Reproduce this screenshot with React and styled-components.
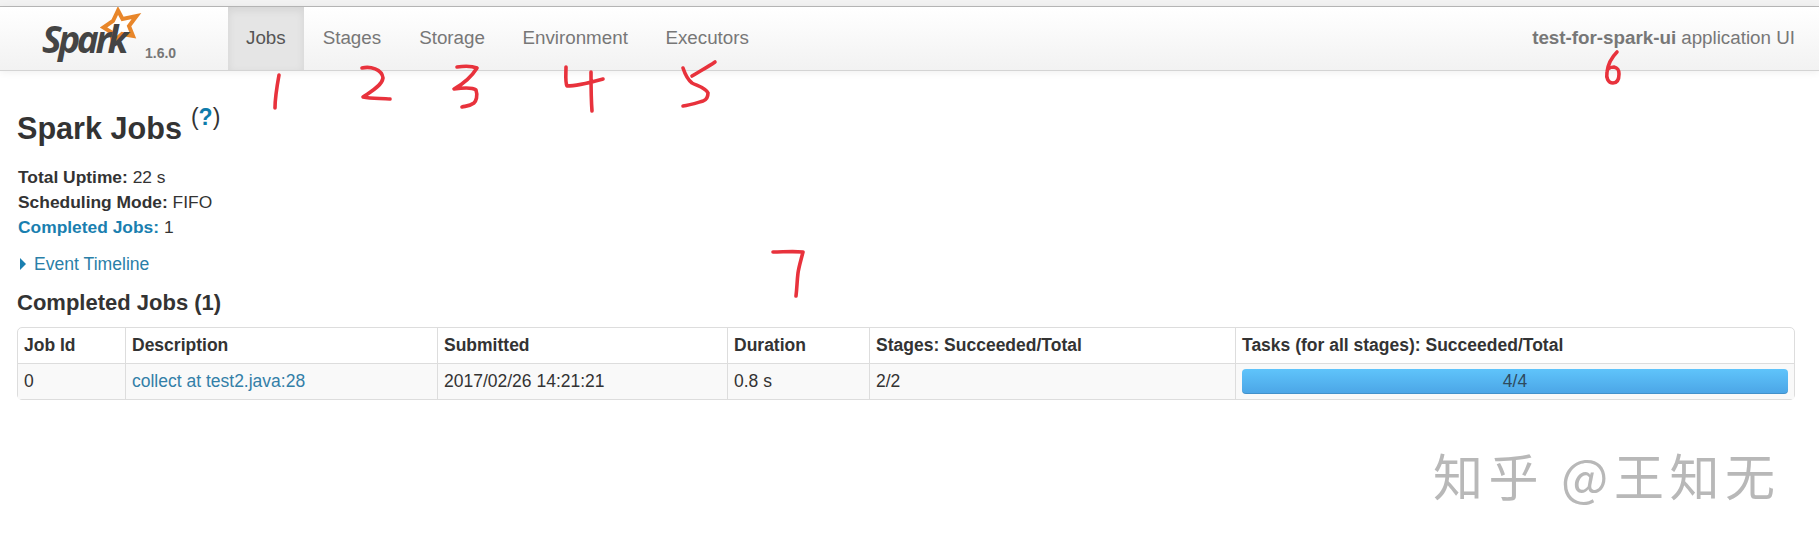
import React from "react";
import styled, { createGlobalStyle } from "styled-components";

const GlobalStyle = createGlobalStyle`
  html, body {
    margin: 0;
    padding: 0;
    background: #fff;
  }
  body {
    font-family: "Liberation Sans", Arial, sans-serif;
    font-size: 17.4px;
    color: #333;
    overflow: hidden;
  }
`;

const Page = styled.div`
  position: relative;
  width: 1819px;
  height: 549px;
  overflow: hidden;
`;

const TopStrip = styled.div`
  height: 6px;
  background: #f2f2f2;
  border-bottom: 1px solid #b9b9b9;
`;

const Navbar = styled.nav`
  height: 63px;
  display: flex;
  align-items: stretch;
  padding-right: 24px;
  background: linear-gradient(to bottom, #ffffff, #f2f2f2);
  border-bottom: 1px solid #d4d4d4;
  box-shadow: 0 1px 8px rgba(0, 0, 0, 0.07);
`;

const Brand = styled.div`
  width: 228px;
  flex: none;
  display: flex;
`;

const Tabs = styled.div`
  display: flex;
  flex: 1;
`;

const Tab = styled.a`
  display: flex;
  align-items: center;
  box-sizing: border-box;
  height: 63px;
  padding: 0 ${(p) => p.$pad}px 2px ${(p) => p.$pad}px;
  font-size: 18.8px;
  color: ${(p) => (p.$active ? "#555" : "#777")};
  background: ${(p) => (p.$active ? "#e5e5e5" : "transparent")};
  box-shadow: ${(p) => (p.$active ? "inset 0 3px 8px rgba(0,0,0,0.08)" : "none")};
`;

const AppName = styled.div`
  display: flex;
  align-items: center;
  gap: 5px;
  padding-bottom: 2px;
  font-size: 18.8px;
  color: #777;
  b {
    font-weight: 700;
  }
`;

const Content = styled.main`
  padding: 37px 18px 0 17px;
`;

const Title = styled.h3`
  margin: 0;
  display: flex;
  align-items: flex-start;
  gap: 9px;
  font-size: 30.6px;
  line-height: 40px;
  font-weight: 700;
  color: #333;
`;

const Help = styled.sup`
  font-size: 23px;
  line-height: 26px;
  font-weight: 400;
  margin-top: -4px;
  color: #333;
  a {
    color: #0f7bab;
    font-weight: 700;
  }
`;

const Summary = styled.ul`
  list-style: none;
  margin: 17px 0 0;
  padding: 0 0 0 1px;
  line-height: 25px;
  li strong {
    font-weight: 700;
  }
`;

const SummaryLink = styled.strong`
  color: #1a7fb0;
`;

const Timeline = styled.div`
  display: flex;
  align-items: center;
  gap: 8px;
  margin-top: 11px;
  height: 26px;
  padding-left: 3px;
  font-size: 17.6px;
  color: #2a7fa8;
`;

const Arrow = styled.span`
  width: 0;
  height: 0;
  border-left: 6px solid #1a7fb0;
  border-top: 6px solid transparent;
  border-bottom: 6px solid transparent;
`;

const SectionTitle = styled.h4`
  margin: 12px 0 0;
  font-size: 22px;
  line-height: 28px;
  font-weight: 700;
  color: #333;
`;

const Table = styled.table`
  width: 1778px;
  margin-top: 10px;
  table-layout: fixed;
  border-collapse: separate;
  border-spacing: 0;
  border: 1px solid #ddd;
  border-radius: 5px;
  font-size: 17.5px;
`;

const Th = styled.th`
  height: 35px;
  padding: 0 6px;
  text-align: left;
  font-weight: 700;
  color: #333;
  border-left: ${(p) => (p.$first ? "none" : "1px solid #ddd")};
  border-bottom: 1px solid #ddd;
`;

const Td = styled.td`
  height: 35px;
  padding: 0 6px;
  background: #f9f9f9;
  color: #333;
  border-left: ${(p) => (p.$first ? "none" : "1px solid #ddd")};
`;

const JobLink = styled.a`
  color: #337fa8;
`;

const Progress = styled.div`
  height: 25px;
  display: flex;
  align-items: center;
  justify-content: center;
  border-radius: 4px;
  color: #2f4a5e;
  background: linear-gradient(to bottom, #5fc4fb, #4ba5e6);
  box-shadow: inset 0 -1px 0 rgba(0, 0, 0, 0.12);
`;

const Watermark = styled.div`
  position: absolute;
  left: 1433px;
  top: 441px;
  font-family: "Noto Sans CJK SC", "Liberation Sans", sans-serif;
  font-size: 50px;
  font-weight: 400;
  line-height: 66px;
  letter-spacing: 5.6px;
  color: #b8b8b8;
  white-space: pre;
`;

const Marks = styled.svg`
  position: absolute;
  left: 0;
  top: 0;
  pointer-events: none;
`;

const marks = [
  "M279 75 C277 86 275 97 275 108",
  "M362 68 C370 66 382 69 383 78 C382 86 370 92 363 97 C372 99 382 98 390 99",
  "M457 67 C464 66 472 66 477 68 C472 76 463 84 454 89 C462 88 472 87 476 90 C478 96 476 101 474 103 C470 106 466 106 462 107",
  "M566 67 C566 74 565 82 567 86 C578 86 592 82 603 79 M591 72 C591 85 591 98 592 111",
  "M715 62 C708 67 700 71 692 76 M683 68 C685 74 688 80 692 83 C698 86 706 88 708 93 C708 98 706 100 703 101 C696 103 690 105 683 106",
  "M1617 52 C1611 58 1608 64 1607 72 C1606 78 1608 83 1613 83 C1618 83 1619 78 1619 74 C1619 70 1618 68 1614 67 C1611 67 1609 68 1608 69",
  "M773 252 C783 252 793 251 803 252 C801 260 799 266 798 273 C797 281 797 288 796 296",
];

function SparkLogo() {
  return (
    <svg width="228" height="63" viewBox="0 0 228 63">
      <path
        d="M118 3.5 L122.5 12 L136.5 9 L129 19 L133 29 L122 27 L113 35 L111 25 L103.5 20.5 L113 14 Z"
        fill="#fff"
        stroke="#e8862a"
        strokeWidth="4"
        strokeLinejoin="miter"
      />
      <text x="42" y="46" fontFamily="'Open Sans', sans-serif" fontStyle="italic" fontWeight="700" fontSize="37" letterSpacing="-3.4" fill="#444">
        Spark
      </text>
      <text x="145" y="51" fontFamily="'Liberation Sans', sans-serif" fontWeight="700" fontSize="14" fill="#777">
        1.6.0
      </text>
    </svg>
  );
}

export default function App() {
  return (
    <Page>
      <GlobalStyle />
      <TopStrip />
      <Navbar>
        <Brand>
          <SparkLogo />
        </Brand>
        <Tabs>
          <Tab $active $pad={18}>Jobs</Tab>
          <Tab $pad={19}>Stages</Tab>
          <Tab $pad={19}>Storage</Tab>
          <Tab $pad={18.5}>Environment</Tab>
          <Tab $pad={19}>Executors</Tab>
        </Tabs>
        <AppName>
          <b>test-for-spark-ui</b> application UI
        </AppName>
      </Navbar>
      <Content>
        <Title>
          Spark Jobs
          <Help>(<a>?</a>)</Help>
        </Title>
        <Summary>
          <li><strong>Total Uptime:</strong> 22 s</li>
          <li><strong>Scheduling Mode:</strong> FIFO</li>
          <li><SummaryLink>Completed Jobs:</SummaryLink> 1</li>
        </Summary>
        <Timeline>
          <Arrow />
          Event Timeline
        </Timeline>
        <SectionTitle>Completed Jobs (1)</SectionTitle>
        <Table>
          <colgroup>
            <col width="107" />
            <col width="312" />
            <col width="290" />
            <col width="142" />
            <col width="366" />
            <col />
          </colgroup>
          <thead>
            <tr>
              <Th $first>Job Id</Th>
              <Th>Description</Th>
              <Th>Submitted</Th>
              <Th>Duration</Th>
              <Th>Stages: Succeeded/Total</Th>
              <Th>Tasks (for all stages): Succeeded/Total</Th>
            </tr>
          </thead>
          <tbody>
            <tr>
              <Td $first>0</Td>
              <Td><JobLink>collect at test2.java:28</JobLink></Td>
              <Td>2017/02/26 14:21:21</Td>
              <Td>0.8 s</Td>
              <Td>2/2</Td>
              <Td><Progress>4/4</Progress></Td>
            </tr>
          </tbody>
        </Table>
      </Content>
      <Watermark>知乎 @王知无</Watermark>
      <Marks width="1819" height="549" viewBox="0 0 1819 549" fill="none">
        {marks.map((d) => (
          <path key={d} d={d} stroke="#e8323c" strokeWidth="3.6" strokeLinecap="round" strokeLinejoin="round" />
        ))}
      </Marks>
    </Page>
  );
}
